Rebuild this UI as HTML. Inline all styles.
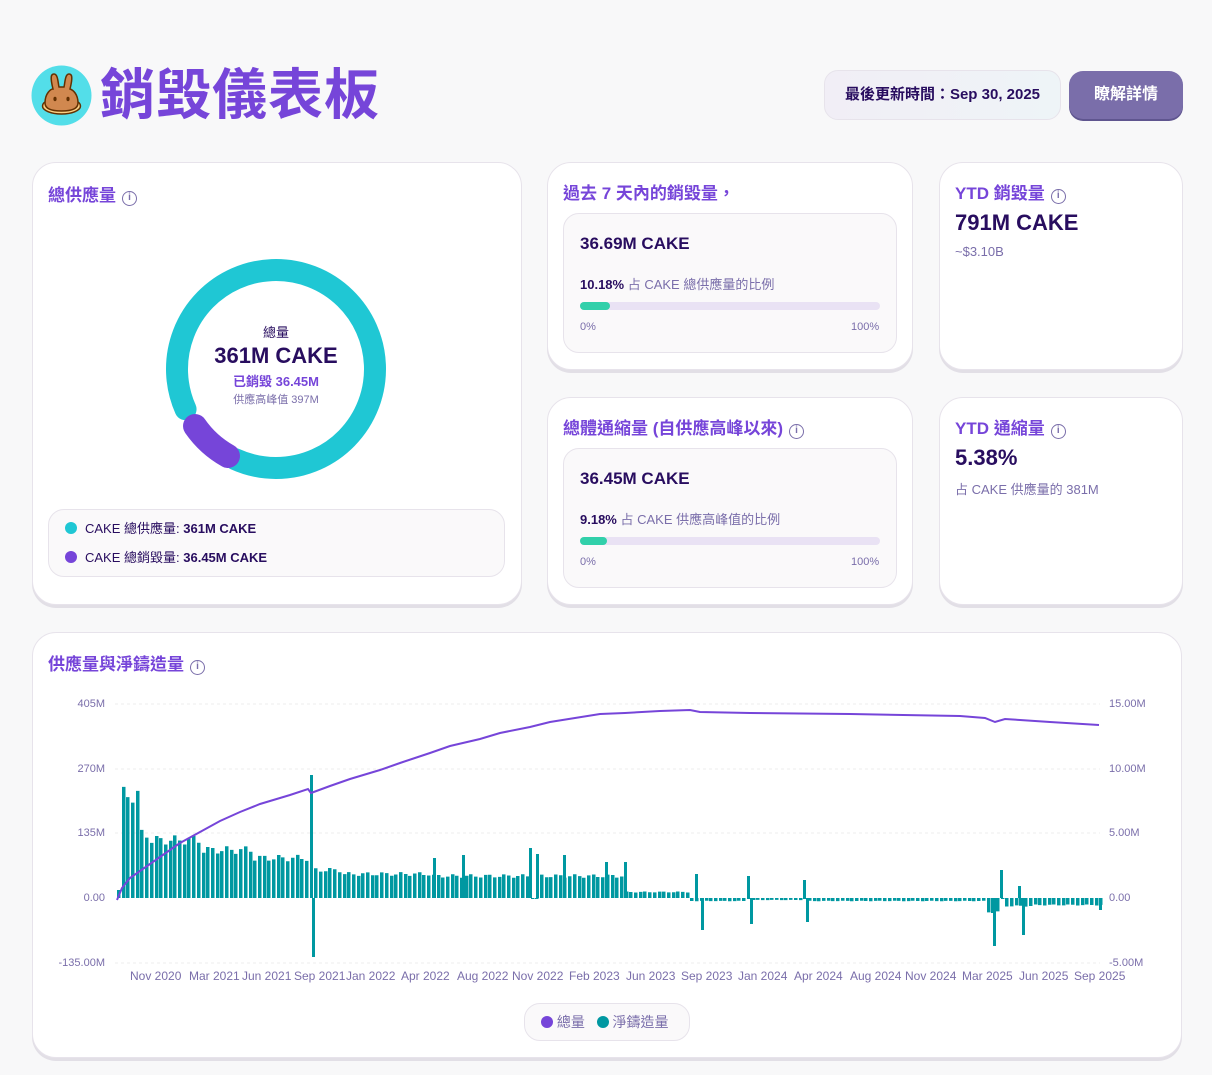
<!DOCTYPE html>
<html><head><meta charset="utf-8"><style>
*{box-sizing:border-box;margin:0;padding:0}
body{width:1212px;height:1075px;background:#f8f8f9;font-family:"Liberation Sans","Noto Sans CJK TC",sans-serif;color:#280d5f;position:relative;overflow:hidden}
.card{position:absolute;background:#fff;border:1px solid #e7e3eb;border-radius:24px;box-shadow:0 3px 0 #e2dfe6}
.h{position:absolute;color:#7645d9;font-weight:700;font-size:17px}
.info{display:inline-block;width:15px;height:15px;border:1.5px solid #7a6eaa;border-radius:50%;font-size:10px;line-height:12px;text-align:center;color:#7a6eaa;vertical-align:1px;margin-left:6px;font-weight:700}
.inner{position:absolute;background:#faf9fa;border:1px solid #e7e3eb;border-radius:16px}
.big{font-weight:700;font-size:17px;position:absolute}
.sub{font-size:13px;color:#7a6eaa;position:absolute}
.bar{position:absolute;height:8px;background:#e9e2f4;border-radius:4px}
.bar i{display:block;height:8px;background:#31d0aa;border-radius:4px}
.ax{position:absolute;font-size:11px;color:#7a6eaa;white-space:nowrap}
.dx{position:absolute;top:969px;font-size:12px;color:#7a6eaa;white-space:nowrap}
</style></head><body>
<svg style="position:absolute;left:31px;top:65px" width="61" height="61" viewBox="0 0 61 61"><circle cx="30.5" cy="30.5" r="30" fill="#53dee9"/><ellipse cx="30.5" cy="41" rx="19" ry="8" fill="#fbcf83" stroke="#633001" stroke-width="1.5"/><path d="M14 38 C14 28 20 24 22 24 C19 12 20 9 23 9 C27 9 27 18 28 22 L33 22 C34 18 34 9 38 9 C41 9 42 12 39 24 C42 25 47 29 47 38 C47 44 40 46 30.5 46 C21 46 14 44 14 38Z" fill="#d1884f" stroke="#633001" stroke-width="1.5"/><ellipse cx="24" cy="34" rx="1.6" ry="2.2" fill="#633001"/><ellipse cx="37" cy="34" rx="1.6" ry="2.2" fill="#633001"/></svg>
<div style="position:absolute;left:100px;top:60px;font-size:55px;font-weight:700;color:#7645d9;letter-spacing:1px;line-height:70px">銷毀儀表板</div>
<div style="position:absolute;left:824px;top:70px;width:237px;height:50px;border:1px solid #e7e3eb;border-radius:14px;background:linear-gradient(90deg,#f1eef6,#eef4f7);font-size:15px;font-weight:700;line-height:48px;text-align:center">最後更新時間：Sep 30, 2025</div>
<div style="position:absolute;left:1069px;top:71px;width:114px;height:48px;border-radius:14px;background:#7a6eaa;box-shadow:0 2px 0 #5f558f;color:#fff;font-size:16px;font-weight:700;line-height:48px;text-align:center">瞭解詳情</div>

<div class="card" style="left:32px;top:162px;width:490px;height:443px"></div>
<div class="h" style="left:48px;top:181px">總供應量<span class="info">i</span></div>
<svg style="position:absolute;left:160px;top:253px" width="232" height="232" viewBox="-116 -116 232 232">
<circle r="99" fill="none" stroke="#1fc7d4" stroke-width="22" stroke-dasharray="550 1000" transform="rotate(156)" stroke-linecap="round"/>
<path d="M -81 57 A 99 99 0 0 0 -48 87" fill="none" stroke="#7645d9" stroke-width="24" stroke-linecap="round"/>
</svg>
<div style="position:absolute;left:176px;top:322px;width:200px;text-align:center">
<div style="font-size:13px">總量</div>
<div style="font-size:22px;font-weight:700;margin-top:2px">361M CAKE</div>
<div style="font-size:13px;color:#7645d9;font-weight:700;margin-top:2px">已銷毀 36.45M</div>
<div style="font-size:11px;color:#7a6eaa;margin-top:1px">供應高峰值 397M</div></div>
<div class="inner" style="left:48px;top:509px;width:457px;height:68px"></div>
<div style="position:absolute;left:65px;top:514px;font-size:13px;line-height:29px"><span style="display:inline-block;width:12px;height:12px;border-radius:50%;background:#1fc7d4;vertical-align:-1px;margin-right:8px"></span>CAKE 總供應量: <b>361M CAKE</b><br><span style="display:inline-block;width:12px;height:12px;border-radius:50%;background:#7645d9;vertical-align:-1px;margin-right:8px"></span>CAKE 總銷毀量: <b>36.45M CAKE</b></div>

<div class="card" style="left:547px;top:162px;width:366px;height:208px"></div>
<div class="h" style="left:563px;top:179px">過去 7 天內的銷毀量，</div>
<div class="inner" style="left:563px;top:213px;width:334px;height:140px"></div>
<div class="big" style="left:580px;top:234px">36.69M CAKE</div>
<div class="sub" style="left:580px;top:274px"><b style="color:#280d5f">10.18%</b> 占 CAKE 總供應量的比例</div>
<div class="bar" style="left:580px;top:302px;width:300px"><i style="width:30px"></i></div>
<div class="ax" style="left:580px;top:321px">0%</div><div class="ax" style="left:851px;top:321px">100%</div>

<div class="card" style="left:939px;top:162px;width:244px;height:208px"></div>
<div class="h" style="left:955px;top:179px">YTD 銷毀量<span class="info">i</span></div>
<div style="position:absolute;left:955px;top:210px;font-size:22px;font-weight:700">791M CAKE</div>
<div class="sub" style="left:955px;top:244px">~$3.10B</div>

<div class="card" style="left:547px;top:397px;width:366px;height:208px"></div>
<div class="h" style="left:563px;top:414px">總體通縮量 (自供應高峰以來)<span class="info">i</span></div>
<div class="inner" style="left:563px;top:448px;width:334px;height:140px"></div>
<div class="big" style="left:580px;top:469px">36.45M CAKE</div>
<div class="sub" style="left:580px;top:509px"><b style="color:#280d5f">9.18%</b> 占 CAKE 供應高峰值的比例</div>
<div class="bar" style="left:580px;top:537px;width:300px"><i style="width:27px"></i></div>
<div class="ax" style="left:580px;top:556px">0%</div><div class="ax" style="left:851px;top:556px">100%</div>

<div class="card" style="left:939px;top:397px;width:244px;height:208px"></div>
<div class="h" style="left:955px;top:414px">YTD 通縮量<span class="info">i</span></div>
<div style="position:absolute;left:955px;top:445px;font-size:22px;font-weight:700">5.38%</div>
<div class="sub" style="left:955px;top:479px">占 CAKE 供應量的 381M</div>

<div class="card" style="left:32px;top:632px;width:1150px;height:426px"></div>
<div class="h" style="left:48px;top:650px">供應量與淨鑄造量<span class="info">i</span></div>
<svg style="position:absolute;left:0;top:0" width="1212" height="1075">
<g stroke="#eee" stroke-dasharray="3 3"><line x1="115" y1="704" x2="1100" y2="704"/><line x1="115" y1="769" x2="1100" y2="769"/><line x1="115" y1="833" x2="1100" y2="833"/><line x1="115" y1="963" x2="1100" y2="963"/></g>
<path id="bars" fill="#0098a1"/>
<polyline fill="none" stroke="#7645d9" stroke-width="2" points="117,900 122,888 130,878 150,864 180,843 200,832 220,821 240,812 260,804 290,795 308,789 311,793 330,786 350,779 380,770 400,763 430,753 450,746 480,739 500,733 530,727 550,722 575,718 600,714 625,713 660,711 690,710 700,712 750,713 850,714 960,716 985,718 995,722 1005,719 1020,720 1050,722 1099,725"/>
</svg>
<div class="ax" style="left:60px;top:698px;width:45px;text-align:right">405M</div>
<div class="ax" style="left:60px;top:763px;width:45px;text-align:right">270M</div>
<div class="ax" style="left:60px;top:827px;width:45px;text-align:right">135M</div>
<div class="ax" style="left:60px;top:892px;width:45px;text-align:right">0.00</div>
<div class="ax" style="left:40px;top:957px;width:65px;text-align:right">-135.00M</div>
<div class="ax" style="left:1109px;top:698px">15.00M</div>
<div class="ax" style="left:1109px;top:763px">10.00M</div>
<div class="ax" style="left:1109px;top:827px">5.00M</div>
<div class="ax" style="left:1109px;top:892px">0.00</div>
<div class="ax" style="left:1109px;top:957px">-5.00M</div>
<div class="dx" style="left:130px">Nov 2020</div><div class="dx" style="left:189px">Mar 2021</div><div class="dx" style="left:242px">Jun 2021</div><div class="dx" style="left:294px">Sep 2021</div><div class="dx" style="left:346px">Jan 2022</div><div class="dx" style="left:401px">Apr 2022</div><div class="dx" style="left:457px">Aug 2022</div><div class="dx" style="left:512px">Nov 2022</div><div class="dx" style="left:569px">Feb 2023</div><div class="dx" style="left:626px">Jun 2023</div><div class="dx" style="left:681px">Sep 2023</div><div class="dx" style="left:738px">Jan 2024</div><div class="dx" style="left:794px">Apr 2024</div><div class="dx" style="left:850px">Aug 2024</div><div class="dx" style="left:905px">Nov 2024</div><div class="dx" style="left:962px">Mar 2025</div><div class="dx" style="left:1019px">Jun 2025</div><div class="dx" style="left:1074px">Sep 2025</div>
<div style="position:absolute;left:524px;top:1003px;width:166px;height:38px;border:1px solid #e7e3eb;border-radius:16px;background:#faf9fa;font-size:14px;color:#7a6eaa;line-height:36px;padding-left:16px"><span style="display:inline-block;width:12px;height:12px;border-radius:50%;background:#7645d9;vertical-align:-1px"></span> 總量 &nbsp;&nbsp;<span style="display:inline-block;width:12px;height:12px;border-radius:50%;background:#0098a1;vertical-align:-1px"></span> 淨鑄造量</div>
<script>
(function(){
var segs=[[117,121,8],[122,138,103],[139,150,64],[150,200,58],[200,250,48],[250,306,40],[314,340,28],[340,430,24],[430,530,22],[540,625,22],[625,690,6],[690,745,-3],[752,800,-2],[808,985,-3],[985,1000,-14],[1003,1030,-8],[1030,1100,-7]];
var d="",x=117,s=4.7;
function h(px){for(var i=0;i<segs.length;i++){if(px>=segs[i][0]&&px<segs[i][1])return segs[i][2];}return 0;}
var spikes={310:123,312:-59,433:40,462:43,529:50,536:44,563:43,605:36,624:36,695:24,701:-32,747:22,750:-26,803:18,806:-24,993:-48,1000:28,1018:12,1022:-37,1099:-12};
var k=0;
for(;x<1100;x+=s){var px=Math.round(x);var v=h(px);var j=Math.sin(k++*1.7)*0.08*v;v=v+j;
if(px>=306&&px<314)continue;
var y=v>=0?898-v:898,hh=Math.max(Math.abs(v),1);d+="M"+px+" "+y+"h3.5v"+hh+"h-3.5z";}
for(var p in spikes){var v=spikes[p];var y=v>=0?898-v:898;d+="M"+p+" "+y+"h3v"+Math.abs(v)+"h-3z";}
document.getElementById("bars").setAttribute("d",d);
})();
</script>
</body></html>
